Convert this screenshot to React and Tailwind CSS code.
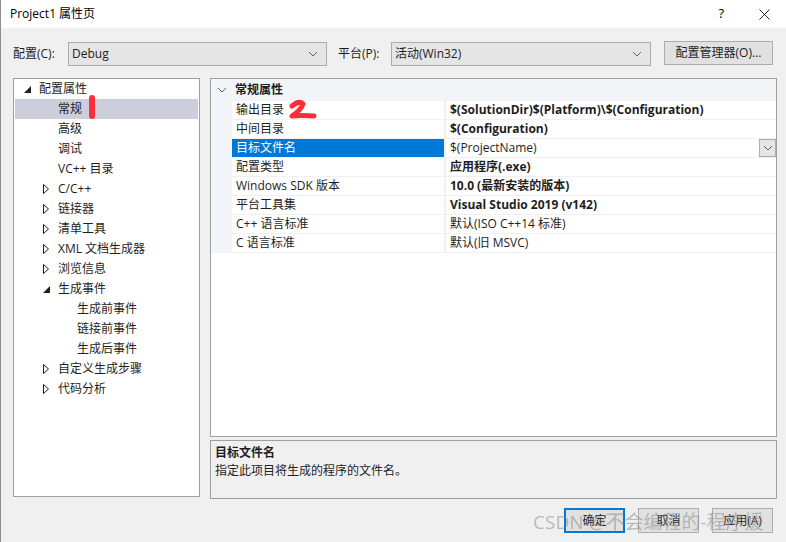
import React from "react";

const font = { fontFamily: '"Open Sans", "Noto Sans CJK SC", sans-serif' };

const Chevron = ({ className = "" }) => (
    <svg width="10" height="6" viewBox="0 0 10 6" className={className}>
        <path d="M1 1 L5 5 L9 1" fill="none" stroke="#606060" strokeWidth="1" />
    </svg>
);

const Expanded = () => (
    <svg width="7" height="7" viewBox="0 0 7 7">
        <path d="M7 0 L7 7 L0 7 Z" fill="#1e1e1e" />
    </svg>
);

const Collapsed = () => (
    <svg width="6" height="10" viewBox="0 0 6 10">
        <path d="M0.5 0.5 L5.5 5 L0.5 9.5 Z" fill="white" stroke="#1e1e1e" strokeWidth="1" />
    </svg>
);

const treeItems = [
    { label: "配置属性", level: 0, icon: "open" },
    { label: "常规", level: 1, selected: true },
    { label: "高级", level: 1 },
    { label: "调试", level: 1 },
    { label: "VC++ 目录", level: 1 },
    { label: "C/C++", level: 1, icon: "closed" },
    { label: "链接器", level: 1, icon: "closed" },
    { label: "清单工具", level: 1, icon: "closed" },
    { label: "XML 文档生成器", level: 1, icon: "closed" },
    { label: "浏览信息", level: 1, icon: "closed" },
    { label: "生成事件", level: 1, icon: "open" },
    { label: "生成前事件", level: 2 },
    { label: "链接前事件", level: 2 },
    { label: "生成后事件", level: 2 },
    { label: "自定义生成步骤", level: 1, icon: "closed" },
    { label: "代码分析", level: 1, icon: "closed" },
];

const props = [
    { name: "输出目录", value: "$(SolutionDir)$(Platform)\\$(Configuration)", bold: true },
    { name: "中间目录", value: "$(Configuration)", bold: true },
    { name: "目标文件名", value: "$(ProjectName)", selected: true },
    { name: "配置类型", value: "应用程序(.exe)", bold: true },
    { name: "Windows SDK 版本", value: "10.0 (最新安装的版本)", bold: true },
    { name: "平台工具集", value: "Visual Studio 2019 (v142)", bold: true },
    { name: "C++ 语言标准", value: "默认(ISO C++14 标准)" },
    { name: "C 语言标准", value: "默认(旧 MSVC)" },
];

const indent = ["pl-[9px]", "pl-[28px]", "pl-[47px]"];

const TreeRow = ({ item }) => (
    <div
        className={`h-[20px] flex items-center ${indent[item.level]} ${
            item.selected ? "bg-[#cccedb]" : ""
        }`}
    >
        <div className="w-[15px] flex items-center">
            {item.icon === "open" && <Expanded />}
            {item.icon === "closed" && <Collapsed />}
        </div>
        <span>{item.label}</span>
    </div>
);

const App = () => {
    return (
        <div
            className="w-[786px] h-[542px] bg-[#f0f0f0] border-l border-[#8e8e8e] relative overflow-hidden text-[12px] text-[#1e1e1e]"
            style={font}
        >
            {/* title bar */}
            <div className="h-[28px] bg-white flex items-center justify-between pl-[9px] pr-[16px]">
                <span className="text-[12px] text-black">Project1 属性页</span>
                <div className="flex items-center gap-[35px]">
                    <span className="text-[13px] text-black">?</span>
                    <svg width="11" height="11" viewBox="0 0 11 11">
                        <path d="M0.5 0.5 L10.5 10.5 M10.5 0.5 L0.5 10.5" stroke="#222" strokeWidth="1" />
                    </svg>
                </div>
            </div>

            {/* config row */}
            <div className="flex items-center mt-[13px] pl-[12px] h-[25px]">
                <span className="w-[55px]">配置(C):</span>
                <div className="w-[259px] h-[24px] bg-[#e5e5e5] border border-[#acacac] flex items-center justify-between pl-[3px] pr-[8px]">
                    <span>Debug</span>
                    <Chevron />
                </div>
                <span className="ml-[11px] w-[53px]">平台(P):</span>
                <div className="w-[260px] h-[24px] bg-[#e5e5e5] border border-[#acacac] flex items-center justify-between pl-[3px] pr-[8px]">
                    <span>活动(Win32)</span>
                    <Chevron />
                </div>
                <div className="ml-[13px] w-[109px] h-[24px] bg-[#e1e1e1] border border-[#adadad] flex items-center justify-center -mt-[1px]">
                    配置管理器(O)...
                </div>
            </div>

            {/* main */}
            <div className="flex mt-[12px] pl-[12px] gap-[10px]">
                <div className="w-[187px] h-[419px] bg-white border border-[#a0a0a0] pr-[1px] pl-[1px]">
                    {treeItems.map((it) => (
                        <TreeRow key={it.label} item={it} />
                    ))}
                </div>

                <div className="flex flex-col w-[567px]">
                    <div className="h-[359px] bg-white border border-[#a0a0a0]">
                        <div className="h-[22px] bg-[#f2f4f8] flex items-center font-bold">
                            <div className="w-[21px] flex justify-center">
                                <Chevron />
                            </div>
                            <span className="pl-[3px]">常规属性</span>
                        </div>
                        <div className="flex">
                            <div className="w-[21px] bg-[#f2f4f8] self-stretch" />
                            <div className="flex-1">
                                {props.map((p) => (
                                    <div key={p.name} className="h-[19px] flex border-b border-[#f0f0f0]">
                                        <div
                                            className={`w-[214px] pl-[4px] flex items-center border-r-2 border-[#f0f0f0] ${
                                                p.selected ? "bg-[#0078d7] text-white" : ""
                                            }`}
                                        >
                                            {p.name}
                                        </div>
                                        <div
                                            className={`flex-1 flex items-center justify-between pl-[4px] ${
                                                p.bold ? "font-bold" : ""
                                            }`}
                                        >
                                            <span>{p.value}</span>
                                            {p.selected && (
                                                <div className="w-[17px] h-[18px] bg-[#e5e5e5] border border-[#acacac] flex items-center justify-center">
                                                    <Chevron />
                                                </div>
                                            )}
                                        </div>
                                    </div>
                                ))}
                            </div>
                        </div>
                    </div>
                    <div className="mt-[3px] h-[59px] border border-[#a0a0a0] bg-[#f0f0f0] px-[4px] pt-[3px]">
                        <div className="font-bold leading-[18px]">目标文件名</div>
                        <div className="leading-[18px]">指定此项目将生成的程序的文件名。</div>
                    </div>
                </div>
            </div>

            {/* buttons */}
            <div className="flex justify-end gap-[13px] pr-[13px] mt-[9px]">
                <div className="w-[61px] h-[25px] border-2 border-[#0078d7] bg-[#e1e1e1] flex items-center justify-center">
                    确定
                </div>
                <div className="w-[61px] h-[25px] border border-[#adadad] bg-[#e1e1e1] flex items-center justify-center">
                    取消
                </div>
                <div className="w-[61px] h-[25px] border border-[#adadad] bg-[#e1e1e1] flex items-center justify-center">
                    应用(A)
                </div>
            </div>

            {/* watermark */}
            <div className="absolute left-[532px] top-[508px] text-[19px] text-[#8a8a8a]/55 whitespace-nowrap pointer-events-none">
                CSDN @不会编程的-程序媛
            </div>

            {/* red annotations */}
            <svg className="absolute left-0 top-0 pointer-events-none" width="786" height="542">
                <path d="M91 98 L91 116" stroke="#ff2d3a" strokeWidth="6" strokeLinecap="round" />
                <path
                    d="M291 106 Q298 100 302 104 Q300 110 291 116 Q300 115 313 116"
                    fill="none"
                    stroke="#ff2d3a"
                    strokeWidth="5"
                    strokeLinecap="round"
                    strokeLinejoin="round"
                />
            </svg>
        </div>
    );
};

export default App;
